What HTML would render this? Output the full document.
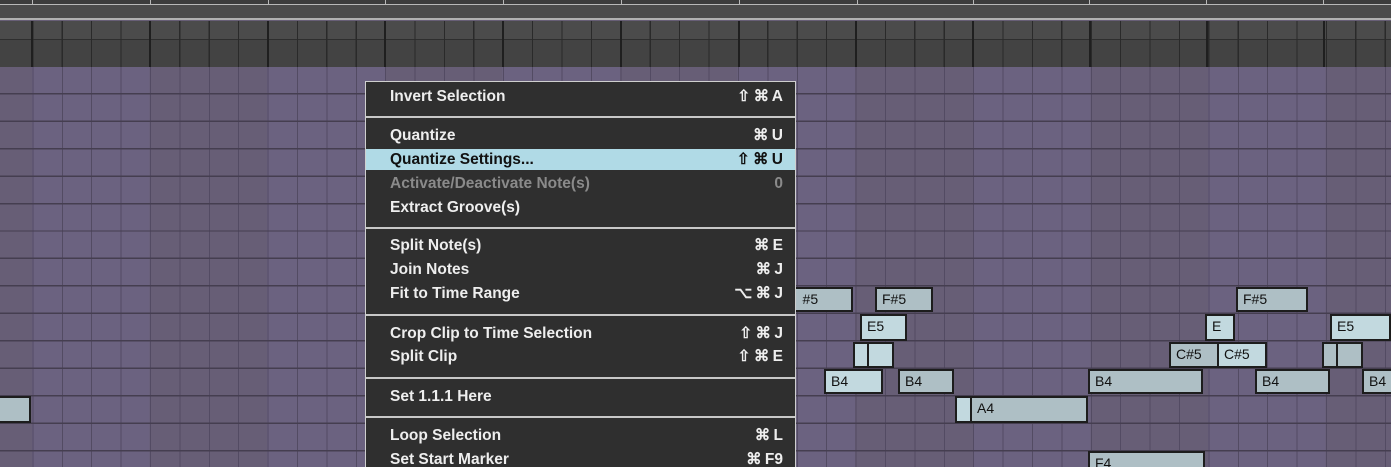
<!DOCTYPE html>
<html><head><meta charset="utf-8"><style>
*{margin:0;padding:0;box-sizing:border-box}
html,body{width:1391px;height:467px;overflow:hidden}
body{background:#675e76;position:relative;font-family:"Liberation Sans",sans-serif}
.abs{position:absolute}
#ruler{left:0;top:0;width:1391px;height:5px;background:#3c3c3c;border-bottom:1px solid #b8b8b8}
#band{left:0;top:5px;width:1391px;height:15px;background:#4b4b4b;border-bottom:2px solid #b0b0b0}
#dark{left:0;top:21px;width:1391px;height:46px;background:linear-gradient(#4b4b4b 0 18px,#2e2e2e 18px 19px,#434343 19px);}
#dgrid{left:0;top:21px;width:1391px;height:46px;background:repeating-linear-gradient(90deg,transparent 0 28.2px,#2a2a2a 28.2px 29.4px);background-position:4px 0}
#purple{left:0;top:67px;width:1391px;height:400px;
 background:repeating-linear-gradient(90deg,#6b6280 0 117.6px,#675e76 117.6px 235.2px);background-position:32px 0}
#vgrid{left:0;top:67px;width:1391px;height:400px;background:repeating-linear-gradient(90deg,transparent 0 28.4px,#534b63 28.4px 29.4px);background-position:4px 0}
#hgrid{left:0;top:67px;width:1391px;height:400px;background:repeating-linear-gradient(180deg,transparent 0 26px,#453e50 26px 27.45px);background-position:0 0}
.dbar{position:absolute;width:2px;background:#1f1f1f;top:21px;height:46px}
.rt{position:absolute;top:0;width:1px;height:5px;background:#b8b8b8}
.n{position:absolute;background:#aebfc5;border:2px solid #1d1d1d;color:#111;font-size:14px;padding-left:5px;line-height:20px;overflow:hidden;white-space:nowrap}
.n.l{background:#c2d9df}
#menu{left:365px;top:81px;width:431px;height:400px;background:#2f2f2f;border:1px solid #cfcfcf;color:#eee;font-size:15.5px;font-weight:bold}
.it{position:absolute;left:0;width:429px;height:22px;line-height:22px;padding-left:24px}
.it span{position:absolute;right:12px;top:0;word-spacing:-1px}
.sep{position:absolute;left:0;width:429px;height:2px;background:#c8c8c8}
.hl{background:#b0dae6;color:#111}
.dis{color:#8a8a8a}
</style></head><body>
<div class="abs" id="purple"></div>
<div class="abs" id="vgrid"></div>
<div class="abs" id="hgrid"></div>
<div class="abs" id="ruler"></div>
<div class="rt" style="left:32px"></div><div class="rt" style="left:150px"></div><div class="rt" style="left:268px"></div><div class="rt" style="left:385px"></div><div class="rt" style="left:503px"></div><div class="rt" style="left:621px"></div><div class="rt" style="left:739px"></div><div class="rt" style="left:857px"></div><div class="rt" style="left:973px"></div><div class="rt" style="left:1089px"></div><div class="rt" style="left:1206px"></div><div class="rt" style="left:1323px"></div>
<div class="abs" id="band"></div>
<div class="abs" id="dark"></div>
<div class="abs" id="dgrid"></div>
<div class="dbar" style="left:31px"></div><div class="dbar" style="left:149px"></div><div class="dbar" style="left:267px"></div><div class="dbar" style="left:384px"></div><div class="dbar" style="left:502px"></div><div class="dbar" style="left:620px"></div><div class="dbar" style="left:738px"></div><div class="dbar" style="left:855px"></div><div class="dbar" style="left:972px"></div><div class="dbar" style="left:1089px"></div><div class="dbar" style="left:1206px"></div><div class="dbar" style="left:1323px"></div>

<div class="n" style="left:780px;top:287px;width:73px;height:25px">&nbsp;&nbsp;&nbsp;&nbsp;#5</div>
<div class="n" style="left:875px;top:287px;width:58px;height:25px">F#5</div>
<div class="n" style="left:1236px;top:287px;width:72px;height:25px">F#5</div>
<div class="n l" style="left:860px;top:314px;width:47px;height:27px">E5</div>
<div class="n l" style="left:1205px;top:314px;width:30px;height:27px">E</div>
<div class="n l" style="left:1330px;top:314px;width:61px;height:27px">E5</div>
<div class="n l" style="left:853px;top:342px;width:16px;height:26px"></div>
<div class="n l" style="left:867px;top:342px;width:27px;height:26px"></div>
<div class="n" style="left:1169px;top:342px;width:50px;height:26px">C#5</div>
<div class="n l" style="left:1217px;top:342px;width:50px;height:26px">C#5</div>
<div class="n" style="left:1322px;top:342px;width:16px;height:26px"></div>
<div class="n" style="left:1336px;top:342px;width:27px;height:26px"></div>
<div class="n l" style="left:824px;top:369px;width:59px;height:25px">B4</div>
<div class="n" style="left:898px;top:369px;width:56px;height:25px">B4</div>
<div class="n" style="left:1088px;top:369px;width:115px;height:25px">B4</div>
<div class="n" style="left:1255px;top:369px;width:75px;height:25px">B4</div>
<div class="n" style="left:1362px;top:369px;width:40px;height:25px">B4</div>
<div class="n" style="left:-3px;top:396px;width:34px;height:27px"></div>
<div class="n l" style="left:955px;top:396px;width:17px;height:27px"></div>
<div class="n" style="left:970px;top:396px;width:118px;height:27px">A4</div>
<div class="n" style="left:1088px;top:451px;width:117px;height:25px">F4</div>

<div class="abs" id="menu">
<div class="it" style="top:4px">Invert Selection<span>⇧ ⌘ A</span></div>
<div class="sep" style="top:34px"></div>
<div class="it" style="top:43px">Quantize<span>⌘ U</span></div>
<div class="it hl" style="top:67px;height:21px;line-height:21px">Quantize Settings...<span>⇧ ⌘ U</span></div>
<div class="it dis" style="top:91px">Activate/Deactivate Note(s)<span>0</span></div>
<div class="it" style="top:115px">Extract Groove(s)</div>
<div class="sep" style="top:145px"></div>
<div class="it" style="top:153px">Split Note(s)<span>⌘ E</span></div>
<div class="it" style="top:177px">Join Notes<span>⌘ J</span></div>
<div class="it" style="top:201px">Fit to Time Range<span>⌥ ⌘ J</span></div>
<div class="sep" style="top:232px"></div>
<div class="it" style="top:241px">Crop Clip to Time Selection<span>⇧ ⌘ J</span></div>
<div class="it" style="top:264px">Split Clip<span>⇧ ⌘ E</span></div>
<div class="sep" style="top:295px"></div>
<div class="it" style="top:304px">Set 1.1.1 Here</div>
<div class="sep" style="top:334px"></div>
<div class="it" style="top:343px">Loop Selection<span>⌘ L</span></div>
<div class="it" style="top:367px">Set Start Marker<span>⌘ F9</span></div>
</div>
</body></html>
